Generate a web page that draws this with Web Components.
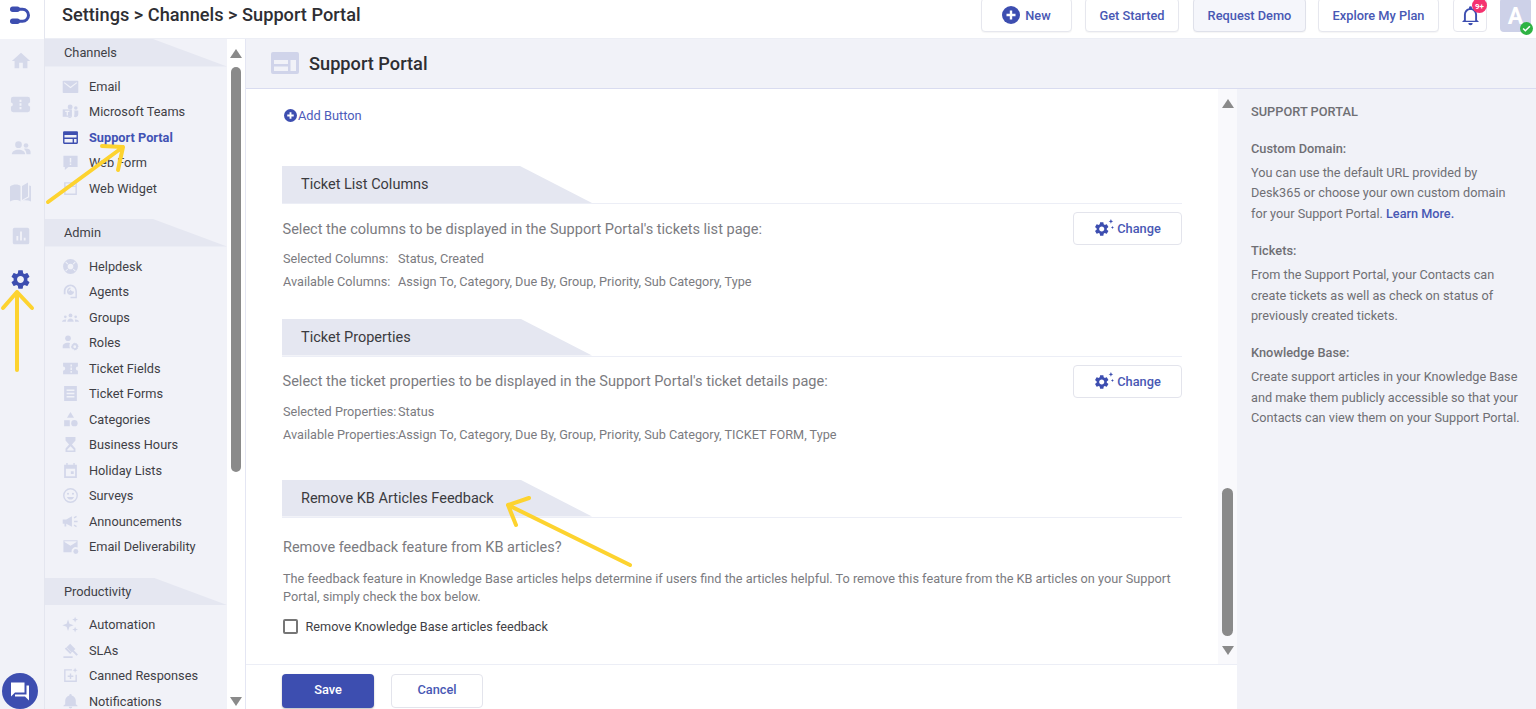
<!DOCTYPE html>
<html lang="en"><head><meta charset="utf-8"><title>Support Portal</title>
<style>
html,body{margin:0;height:100%;overflow:hidden;background:#fff}
body{font-family:Roboto,"Liberation Sans",sans-serif;color:#3b3b3f}
</style></head><body>
<app-shell>
  <app-rail slot="rail"></app-rail>
  <top-bar slot="top"></top-bar>
  <nav-panel slot="nav">
    <nav-group label="Channels" first>
      <nav-item icon="mail">Email</nav-item>
      <nav-item icon="teams">Microsoft Teams</nav-item>
      <nav-item icon="portal" active>Support Portal</nav-item>
      <nav-item icon="form">Web Form</nav-item>
      <nav-item icon="widget">Web Widget</nav-item>
    </nav-group>
    <nav-group label="Admin">
      <nav-item icon="help">Helpdesk</nav-item>
      <nav-item icon="agent">Agents</nav-item>
      <nav-item icon="groups">Groups</nav-item>
      <nav-item icon="roles">Roles</nav-item>
      <nav-item icon="ticket">Ticket Fields</nav-item>
      <nav-item icon="tform">Ticket Forms</nav-item>
      <nav-item icon="cats">Categories</nav-item>
      <nav-item icon="hour">Business Hours</nav-item>
      <nav-item icon="cal">Holiday Lists</nav-item>
      <nav-item icon="smile">Surveys</nav-item>
      <nav-item icon="mega">Announcements</nav-item>
      <nav-item icon="deliv">Email Deliverability</nav-item>
    </nav-group>
    <nav-group label="Productivity">
      <nav-item icon="spark">Automation</nav-item>
      <nav-item icon="gavel">SLAs</nav-item>
      <nav-item icon="canned">Canned Responses</nav-item>
      <nav-item icon="bell">Notifications</nav-item>
    </nav-group>
  </nav-panel>
  <page-head slot="head">Support Portal</page-head>
  <settings-body slot="body">
    <add-link>Add Button</add-link>
    <config-section heading="Ticket List Columns" gap="25.5" lead="Select the columns to be displayed in the Support Portal's tickets list page:">
      <detail-line label="Selected Columns:">Status, Created</detail-line>
      <detail-line label="Available Columns:">Assign To, Category, Due By, Group, Priority, Sub Category, Type</detail-line>
    </config-section>
    <config-section heading="Ticket Properties" gap="34" lead="Select the ticket properties to be displayed in the Support Portal's ticket details page:">
      <detail-line label="Selected Properties:">Status</detail-line>
      <detail-line label="Available Properties:">Assign To, Category, Due By, Group, Priority, Sub Category, TICKET FORM, Type</detail-line>
    </config-section>
    <feedback-section heading="Remove KB Articles Feedback"></feedback-section>
  </settings-body>
  <form-footer slot="foot"></form-footer>
  <help-panel slot="help"></help-panel>
</app-shell>
<script>
const I={
home:'<path d="M10 20v-6h4v6h5v-8h3L12 3 2 12h3v8z"/>',
rticket:'<path fill-rule="evenodd" d="M22 10V6.5A2.5 2.5 0 0 0 19.500 4h-15A2.500 2.500 0 0 0 2 6.500V10a2 2 0 0 1 0 4v3.500A2.500 2.500 0 0 0 4.500 20h15a2.500 2.500 0 0 0 2.500-2.500V14a2 2 0 0 1 0-4zM13 7h-2v2.500h2zm0 3.700h-2v2.600h2zm0 3.800h-2V17h2z"/>',
people:'<circle cx="9" cy="8" r="4"/><circle cx="18" cy="9" r="2.800"/><path d="M1 19.500c0-3.500 3.500-5.500 8-5.500s8 2 8 5.500zM15.500 13c.8-.3 1.600-.4 2.500-.4 3 0 5.500 1.400 5.500 4V19.500h-5c0-2.500-1-4.800-3-6.500z"/>',
book:'<path fill-rule="evenodd" d="M1 6.500C2.800 5 5 4.500 7 4.500c1.800 0 3.500.5 4.500 1.500v15.500c-1.300-1-2.900-1.400-4.500-1.400-2 0-4 .4-6 1.400zM13 6l6-3.500v14L13 20zm7.200-.5L22 6v15.500c-2.500-1-5-1.500-8-1l6.200-3.200z"/>',
chart:'<path fill-rule="evenodd" d="M19 3H5a2 2 0 0 0-2 2v14c0 1.100.9 2 2 2h14a2 2 0 0 0 2-2V5a2 2 0 0 0-2-2zM9 17H7v-5h2zm4 0h-2V7h2zm4 0h-2v-3h2z"/>',
gear:'<path d="M19.140 12.940c.04-.3.06-.61.06-.94 0-.32-.02-.64-.07-.94l2.030-1.580c.18-.14.23-.41.12-.61l-1.920-3.320c-.12-.22-.37-.29-.59-.22l-2.390.96c-.5-.38-1.030-.7-1.620-.94l-.36-2.540c-.04-.24-.24-.41-.48-.41h-3.840c-.24 0-.43.17-.47.41l-.36 2.540c-.59.24-1.130.57-1.620.94l-2.390-.96c-.22-.08-.47 0-.59.22L2.740 8.870c-.12.21-.08.47.12.61l2.030 1.580c-.05.3-.09.63-.09.94s.02.64.07.94l-2.030 1.580c-.18.14-.23.41-.12.61l1.920 3.320c.12.22.37.29.59.22l2.390-.96c.5.38 1.030.7 1.620.94l.36 2.540c.05.24.24.41.48.41h3.840c.24 0 .44-.17.47-.41l.36-2.540c.59-.24 1.130-.56 1.620-.94l2.390.96c.22.08.47 0 .59-.22l1.920-3.320c.12-.22.07-.47-.12-.61l-2.010-1.580zM12 15.600c-1.980 0-3.600-1.620-3.600-3.600s1.620-3.600 3.600-3.600 3.600 1.620 3.600 3.600-1.620 3.600-3.600 3.600z"/>',
mail:'<rect x="1" y="4" width="22" height="17" rx="1"/><path d="M3 6.500 12 13.500 21 6.500" fill="none" stroke="#f1f2f8" stroke-width="1.600"/>',
teams:'<circle cx="11.500" cy="5.500" r="3.500"/><circle cx="19.500" cy="7" r="2.500"/><path d="M1 9h13v10.500H1z"/><path d="M15.500 10.500H23V16a4 4 0 0 1-6 3.500c-.3-.2.500-2 .5-3.500v-5z"/><path d="M8 19.500h6a4 4 0 0 1-6 0z"/><path d="M4.500 11h6v1.700H8.400v5H6.600v-5H4.500z" fill="#f1f2f8"/>',
portal:'<path fill-rule="evenodd" d="M3 3h18a1.500 1.500 0 0 1 1.500 1.500v15A1.500 1.500 0 0 1 21 21H3a1.500 1.500 0 0 1-1.500-1.500v-15A1.500 1.500 0 0 1 3 3zm.500 5.500V12h17V8.500zm0 5.500v5h11.500v-5zm13.500 0v5h3.500v-5z"/>',
form:'<path fill-rule="evenodd" d="M2 2.500h20v16H9l-5 4v-4H2zM11 5.500v6.500h2V5.500zm0 8v2h2v-2z"/>',
widget:'<path fill-rule="evenodd" d="M3 3h18v18H3zm2 2v3h14V5zm0 5v9h14v-9z"/>',
help:'<path fill-rule="evenodd" d="M12 1.500a10.500 10.500 0 1 0 0 21 10.500 10.500 0 0 0 0-21zM12 8a4 4 0 1 1 0 8 4 4 0 0 1 0-8zM5.500 5l3.200 3-1 1-3-3.100zm13 0 .8.9-3 3.100-1-1zM7.700 15l1 1-3.200 3-.8-.9zm8.600 0 3 3.100-.8.900-3.200-3z"/>',
agent:'<path fill-rule="evenodd" d="M12 2C6.500 2 2.500 6.200 2.500 12v4H5v-4c0-4.200 3-7.500 7-7.500s7 3.300 7 7.500v7.500h-7v2h9V12c0-5.800-4-10-9-10zM12 6.500c-3 0-5 2.500-5 5.500 0 2.800 2.200 5 5 5s5-2.200 5-5c-2.500 0-4-1-5-3-.6 1.500-1.500 2.500-3 3 .5-2 1.500-3.500 3-3.500z"/>',
groups:'<circle cx="12" cy="9" r="2.700"/><circle cx="4.700" cy="11" r="1.900"/><circle cx="19.300" cy="11" r="1.900"/><path d="M7.500 18c0-2.500 2-4.500 4.500-4.500s4.500 2 4.500 4.500zM0 18c0-2 2-3.300 4.700-3.300.6 0 .9 0 1.300.2C5.500 15.700 5.500 17 5.500 18zm18.500 0c0-1 0-2.300-.5-3.100.4-.2.700-.2 1.300-.2C22 14.700 24 16 24 18z"/>',
roles:'<circle cx="8.500" cy="6" r="4"/><path d="M1 20v-2.500c0-3 3.500-5 7.500-5 1 0 2 .1 2.800.4-1 1.800-1 5 0 7.100z"/><path fill-rule="evenodd" d="M18 12l1.200 1.200 1.600-.3.6 1.600 1.600.6-.3 1.600L23.500 18l-1.400 1.200.3 1.600-1.600.6-.6 1.600-1.600-.3L18 23.500l-1.200-1.800-1.600.3-.6-1.600-1.600-.6.3-1.600L12.500 18l1.300-1.300-.3-1.600 1.600-.6.6-1.600 1.600.3zm0 4a2 2 0 1 0 0 4 2 2 0 0 0 0-4z"/>',
ticket:'<path fill-rule="evenodd" d="M1.500 4h21v5a3 3 0 0 0 0 6v5h-21v-5a3 3 0 0 0 0-6zM14 6.500h-2v2.500h2zm0 4h-2V14h2zm0 5h-2v2.500h2z"/>',
tform:'<path fill-rule="evenodd" d="M3 1.500h18v21H3zm3.500 5v2h11v-2zm0 4.500v2h11v-2zm0 4.500v2h11v-2z"/>',
cats:'<path d="M12 1.500l5 8H7z"/><path d="M3 13h8v8.500H3z"/><circle cx="17.500" cy="17.200" r="4.500"/>',
hour:'<path fill-rule="evenodd" d="M5 1.500h14v5L14 12l5 5.500v5H5v-5l5-5.500-5-5.500zM7.500 19v1.500h9V19L12 14.500z"/>',
cal:'<path fill-rule="evenodd" d="M6 1.500h2V4h8V1.500h2V4h3v18.500H3V4h3zM5.500 9.500V20h13V9.500zm7 3.500h4v4h-4z"/>',
smile:'<path fill-rule="evenodd" d="M12 1.500a10.500 10.500 0 1 0 0 21 10.500 10.500 0 0 0 0-21zm0 2a8.500 8.500 0 1 1 0 17 8.500 8.500 0 0 1 0-17zM8.500 8a1.500 1.500 0 1 0 0 3 1.500 1.500 0 0 0 0-3zm7 0a1.500 1.500 0 1 0 0 3 1.500 1.500 0 0 0 0-3zM7 14c.8 2.300 2.700 3.700 5 3.700s4.200-1.400 5-3.700z"/>',
mega:'<path d="M1 9h5l8-4.500v15L6 15v4H3.500v-4H1z"/><path d="M17 11h5v2h-5zM16.500 6l3.500-2 1 1.700-3.500 2zM16.500 18l3.500 2 1-1.700-3.500-2z"/>',
deliv:'<path fill-rule="evenodd" d="M2 3h20v10.500a6 6 0 0 0-8.500 6.500H2zm1.500 2.500L12 11l8.500-5.500V4.500h-17z"/><circle cx="19.500" cy="19" r="3.500"/>',
spark:'<path d="M8.500 5l2 6 6 2-6 2-2 6-2-6-6-2 6-2zM18.500 1l1.100 3 3 1.100-3 1.100-1.100 3-1.100-3-3-1.100 3-1.100zM18.500 15l1.100 3 3 1.100-3 1.100-1.100 3-1.100-3-3-1.100 3-1.100z"/>',
gavel:'<path d="M2 20h13v2.500H2zM6.500 7.500l5-5 7.300 7.300-5 5z"/><path d="M15.500 10.500l7 7-2 2-7-7zM4 9.500l2-2 7.500 7.500-2 2z"/>',
canned:'<path fill-rule="evenodd" d="M3 3h11v2H5v14h14v-8h2v10H3zM11 9h2v3h3v2h-3v3h-2v-3H8v-2h3zM18.500 1l1 2.500L22 4.500l-2.500 1-1 2.500-1-2.500-2.500-1 2.500-1z"/>',
bell:'<path d="M12 22a2.500 2.500 0 0 0 2.500-2.500h-5A2.500 2.500 0 0 0 12 22zm7.500-6v-5c0-3.600-2.300-6.600-5.800-7.400V3a1.700 1.700 0 0 0-3.400 0v.6C6.800 4.400 4.500 7.400 4.500 11v5l-2.500 2v.8h20V18z"/>',
bello:'<path fill-rule="evenodd" d="M12 23a2.500 2.500 0 0 0 2.500-2.500h-5A2.500 2.500 0 0 0 12 23zm7.500-6v-6c0-3.600-2.300-6.600-5.800-7.400V3a1.700 1.700 0 0 0-3.400 0v.6C6.800 4.400 4.500 7.400 4.500 11v6L2.500 19v.5h19V19zm-2.200 1H6.700v-7c0-3 2.300-5.400 5.300-5.400s5.300 2.400 5.300 5.400z"/>',
chat:'<path d="M3 3.500h13.500v10H7l-4 4z"/><path d="M18.500 6.500H21v15l-4-4H7v-2h11.500z"/>'
};
const svg=(n,s,c='currentColor',extra='')=>`<svg width="${s}" height="${s}" viewBox="0 0 24 24" fill="${c}" aria-hidden="true" ${extra}>${I[n]}</svg>`;
const def=(n,css,html)=>{customElements.define(n,class extends HTMLElement{
  connectedCallback(){ if(this.shadowRoot)return; const r=this.attachShadow({mode:'open'});
    const body=typeof html==='function'?html(this):html; r.innerHTML=`<style>${css}</style>${body}`; }
});};

def('app-shell',`
:host{display:block;position:relative;width:1536px;height:709px;overflow:hidden}
.g{display:grid;width:1536px;height:709px;grid-template-columns:45px 201px 991px 299px;grid-template-rows:39px 50px 575px 45px}
.r{grid-column:1;grid-row:1/5;min-height:0}
.t{grid-column:2/5;grid-row:1}
.n{grid-column:2;grid-row:2/5;min-height:0}
.h{grid-column:3/5;grid-row:2}
.b{grid-column:3;grid-row:3;min-height:0}
.f{grid-column:3;grid-row:4}
.p{grid-column:4;grid-row:3/5}
svg.o{position:absolute;left:0;top:0;pointer-events:none}
`,`<div class="g">
<div class="r"><slot name="rail"></slot></div><div class="t"><slot name="top"></slot></div>
<div class="n"><slot name="nav"></slot></div><div class="h"><slot name="head"></slot></div>
<div class="b"><slot name="body"></slot></div><div class="f"><slot name="foot"></slot></div>
<div class="p"><slot name="help"></slot></div></div>
<svg class="o" width="1536" height="709" fill="none" stroke="#fdd32f" stroke-width="4" stroke-linecap="round" stroke-linejoin="round">
<path d="M48 202 123 147M102 146 123 147 118 170"/>
<path d="M17 370V292M3 308 17 292 32 308"/>
<path d="M630 565 508 505M529 498 508 505 516 525"/></svg>`);

def('app-rail',`
:host{display:flex;flex-direction:column;height:100%;background:#f1f2f8;position:relative;box-sizing:border-box;border-right:1px solid #e4e6ef}
.logo{height:39px;box-sizing:border-box;background:#fff;display:flex;align-items:flex-start;justify-content:center;flex:none;padding-top:5px}
.i{height:43.8px;display:flex;align-items:center;justify-content:center;color:#d5d9ea;flex:none;padding-right:3px}
.a{color:#3d4eb0}
.fab{position:absolute;left:2px;top:673px;width:36px;height:36px;border-radius:50%;background:#3d4eb0;display:flex;align-items:center;justify-content:center;color:#fff}
`,`<div class="logo"><svg width="24" height="20" viewBox="0 0 24 20"><path d="M8 4.200H12.500a6 6 0 0 1 0 12H8" fill="none" stroke="#3d4eb0" stroke-width="3"/><rect x="0" y="1.500" width="10" height="5.500" rx="2.700" fill="#3d4eb0"/><rect x="0" y="13.500" width="10" height="5.500" rx="2.700" fill="#3d4eb0"/></svg></div>
<div class="i">${svg('home',22)}</div><div class="i">${svg('rticket',23)}</div><div class="i">${svg('people',20)}</div><div class="i">${svg('book',24)}</div><div class="i">${svg('chart',22)}</div><div class="i a">${svg('gear',23)}</div>
<div class="fab">${svg('chat',24)}</div>`);

def('top-btn',`
:host{display:block}
div{height:34px;box-sizing:border-box;border:1px solid #e6e7ee;border-radius:4px;background:#fff;display:flex;align-items:center;justify-content:center;gap:5px;font:500 12.800px Roboto,sans-serif;color:#4858b4;box-shadow:0 1px 1px #0000000a}
:host([hl]) div{background:#f5f6fb;border-color:#dfe1ea}
svg{flex:none}
`,t=>`<div style="width:${t.getAttribute('w')}px"><slot name="i"></slot><slot></slot></div>`);

def('top-bar',`
:host{display:flex;align-items:flex-start;height:39px;box-sizing:border-box;background:#fff;border-bottom:1px solid #eceef5;padding-left:17px;overflow:hidden}
h1{margin:0;font:500 18.200px/30px Roboto,sans-serif;color:#2e2e33;flex:1;white-space:nowrap}
.bs{display:flex;gap:13px;margin-top:-2px;align-items:flex-start}
.bell{position:relative;width:34px;height:34px;box-sizing:border-box;border:1px solid #e6e7ee;border-radius:4px;display:flex;align-items:center;justify-content:center;color:#3d4eb0;margin-left:1px}
.badge{position:absolute;left:18px;top:-1px;width:15px;height:15px;border-radius:50%;background:#f5326f;color:#fff;font:700 8px/17px Roboto,sans-serif;text-align:center}
.ava{position:relative;width:31px;height:34px;border-radius:4px;background:#cdd1e8;color:#fff;font:700 23px/38px Roboto,sans-serif;text-align:center;margin-right:5px}
.ok{position:absolute;left:20px;top:23.500px;width:13px;height:13px;border-radius:50%;background:#2fb344;display:flex;align-items:center;justify-content:center}
`,`<h1>Settings &gt; Channels &gt; Support Portal</h1><div class="bs">
<top-btn w="91"><svg slot="i" width="18" height="18" viewBox="0 0 18 18"><circle cx="9" cy="9" r="9" fill="#3d4eb0"/><path d="M9 4.500v9M4.500 9h9" stroke="#fff" stroke-width="2.400"/></svg>New</top-btn>
<top-btn w="94">Get Started</top-btn><top-btn w="113" hl style="margin-left:1px">Request Demo</top-btn><top-btn w="121" style="margin-left:-1px">Explore My Plan</top-btn>
<div class="bell">${svg('bello',21)}<span class="badge">9+</span></div>
<div class="ava">A<span class="ok"><svg width="9" height="9" viewBox="0 0 8 8"><path d="M1 4l2 2 4-4" fill="none" stroke="#fff" stroke-width="1.400"/></svg></span></div></div>`);

def('fake-scroll',`
:host{display:flex;flex-direction:column;align-items:center;flex:none;height:100%;box-sizing:border-box}
.up,.dn{width:0;height:0;border-left:6.500px solid transparent;border-right:6.500px solid transparent;flex:none}
.up{border-bottom:9px solid #8a8a8a}.dn{border-top:9px solid #8a8a8a}
.th{background:#8a8a8a;border-radius:6px;flex:none}
.s{flex:1}
`,t=>`<div class="up" style="margin-top:${t.getAttribute('pad')}px"></div><div style="height:${t.getAttribute('top')}px;flex:none"></div><div class="th" style="width:${t.getAttribute('tw')}px;height:${t.getAttribute('len')}px"></div><div class="s"></div><div class="dn" style="margin-bottom:${t.getAttribute('padb')}px"></div>`);

def('nav-panel',`
:host{display:flex;height:100%;overflow:hidden;background:#fff}
.l{width:182px;background:#f1f2f8;overflow:hidden;flex:none}
.sb{width:18px;flex:none;border-right:1px solid #e4e6f3;background:#fff}
fake-scroll{width:18px}
`,`<div class="l"><slot></slot></div><div class="sb"><fake-scroll pad="10" padb="3" top="9" tw="10" len="405"></fake-scroll></div>`);

def('nav-group',`
:host{display:block;margin-top:18px}
:host([first]){margin-top:0}
.h{height:27.500px;background:#e5e7f1;clip-path:polygon(0 0,108px 0,100% 100%,0 100%);padding-left:19px;font:400 12.800px/27px Roboto,sans-serif;color:#3f3f46;display:flex;align-items:center;width:182px;box-sizing:border-box}
.b{padding-top:7px}
`,t=>`<div class="h">${t.getAttribute('label')}</div><div class="b"><slot></slot></div>`);

def('nav-item',`
:host{display:flex;align-items:center;height:25.500px;padding-left:17px;gap:10px;font:400 12.750px Roboto,sans-serif;color:#3f3f46;white-space:nowrap}
:host([active]){color:#4152b4;font-weight:700}
svg{color:#d3d7ea;flex:none}
:host([active]) svg{color:#3d4eb0}
`,t=>`${svg(t.getAttribute('icon'),17)}<slot></slot>`);

def('page-head',`
:host{display:flex;align-items:center;gap:10px;height:50px;box-sizing:border-box;background:#f1f2f8;border-bottom:1px solid #d9dcf0;padding-left:25px;padding-bottom:1px;font:500 18.200px Roboto,sans-serif;color:#2e2e33}
svg{flex:none}
`,`<svg width="28" height="22" viewBox="0 0 28 22"><path fill="#d0d4ea" fill-rule="evenodd" d="M2 0h24a2 2 0 0 1 2 2v18a2 2 0 0 1-2 2H2a2 2 0 0 1-2-2V2a2 2 0 0 1 2-2zm1 8v4h14V8zm0 6.500V19h14v-4.500zM19.500 8v11H25V8z"/></svg><slot></slot>`);

def('settings-body',`
:host{display:flex;height:100%;overflow:hidden}
.c{width:900px;padding:16px 0 0 36px;flex:none;overflow:hidden}
.t{margin-left:36px;flex:none;width:19px;background:#f9f9fc;display:block}
fake-scroll{width:19px}
`,`<div class="c"><slot></slot></div><div class="t"><fake-scroll pad="10" padb="9" top="380" tw="11" len="148"></fake-scroll></div>`);

def('add-link',`
:host{display:flex;align-items:center;height:20px;padding-left:2px;gap:1px;font:400 12.800px Roboto,sans-serif;color:#4d5cba;margin-bottom:41px}
svg{flex:none}
`,`<svg width="13" height="13" viewBox="0 0 18 18"><circle cx="9" cy="9" r="9" fill="#3d4eb0"/><path d="M9 4.500v9M4.500 9h9" stroke="#fff" stroke-width="2.600"/></svg><slot></slot>`);

def('section-head',`
:host{display:block;border-bottom:1px solid #eceef6;height:37px}
div{width:310px;height:37px;box-sizing:border-box;background:#e5e7f1;clip-path:polygon(0 0,238px 0,100% 100%,0 100%);padding-left:19px;font:400 14.500px/37.500px Roboto,sans-serif;color:#3b3b40}
`,`<div><slot></slot></div>`);

const changeIcon=`<svg width="20" height="18.500" viewBox="0 0 26 24"><g transform="translate(-1 2) scale(.92)">${I.gear.replace('<path','<path fill="#3d4eb0"')}</g><path fill="#3d4eb0" d="M22 0l.9 2.100L25 3l-2.100.9L22 6l-.9-2.100L19 3l2.100-.9zM24 9l.6 1.400 1.400.6-1.400.6L24 13l-.6-1.400L22 11l1.400-.6z"/></svg>`;
def('config-section',`
:host{display:block}
.r{display:flex;justify-content:space-between;align-items:center;margin-top:8px;height:33px}
.l{font:400 14.560px Roboto,sans-serif;color:#7b7b7f;padding-left:.5px}
.btn{width:109px;height:33px;box-sizing:border-box;border:1px solid #e3e4ec;border-radius:4px;display:flex;align-items:center;justify-content:center;gap:3px;font:500 12.800px Roboto,sans-serif;color:#4858b4;background:#fff}
.d{margin-top:2px}
`,t=>`<section-head>${t.getAttribute('heading')}</section-head><div class="r"><span class="l">${t.getAttribute('lead')}</span><span class="btn">${changeIcon}Change</span></div><div class="d" style="margin-bottom:${t.getAttribute('gap')-0}px"><slot></slot></div>`);

def('detail-line',`
:host{display:grid;grid-template-columns:115px 1fr;padding-left:1px;height:23px;align-items:center;font:400 12.700px Roboto,sans-serif;color:#7b7b7f;white-space:nowrap}
`,t=>`<span>${t.getAttribute('label')}</span><span><slot></slot></span>`);

def('feedback-section',`
:host{display:block}
.q{font:400 14.500px/18px Roboto,sans-serif;color:#7b7b7f;margin-top:21px;padding-left:1px}
p{margin:13px 0 0;font:400 12.730px/18px Roboto,sans-serif;color:#7b7b7f;padding-left:1px}
label{display:flex;align-items:center;gap:7.500px;margin-top:11px;font:400 12.700px/20px Roboto,sans-serif;color:#3f3f46}
i{display:block;width:11px;height:11px;border:2px solid #767676;border-radius:2px;background:#fff;margin-left:1px}
`,t=>`<section-head>${t.getAttribute('heading')}</section-head><div class="q">Remove feedback feature from KB articles?</div><p>The feedback feature in Knowledge Base articles helps determine if users find the articles helpful. To remove this feature from the KB articles on your Support Portal, simply check the box below.</p><label><i></i>Remove Knowledge Base articles feedback</label>`);

def('form-footer',`
:host{display:flex;gap:17px;height:45px;box-sizing:border-box;border-top:1px solid #eceef6;padding:9px 0 0 36px;background:#fff}
span{width:92px;height:34px;box-sizing:border-box;border-radius:4px;display:flex;align-items:center;justify-content:center;font:500 12.800px Roboto,sans-serif;padding-bottom:3px}
.s{background:#3d4eb0;color:#fff;box-shadow:0 1px 2px #0004}
.c{background:#fff;color:#4858b4;border:1px solid #e3e4ec}
`,`<span class="s">Save</span><span class="c">Cancel</span>`);

def('help-panel',`
:host{display:block;height:100%;box-sizing:border-box;background:#f1f2f8;padding:15px 0 0 14px;font:400 12.700px/20.400px Roboto,sans-serif;color:#6f6f74}
h2{margin:0 0 18.500px;font:500 12.800px/16px Roboto,sans-serif;color:#6f6f74}
h3{margin:0 0 4.500px;font:500 12.800px/20px Roboto,sans-serif;color:#6f6f74}
p{margin:0 0 16.500px;white-space:nowrap}
b{font-weight:500;color:#4858b4}
`,`<h2>SUPPORT PORTAL</h2>
<h3>Custom Domain:</h3><p>You can use the default URL provided by<br>Desk365 or choose your own custom domain<br>for your Support Portal. <b>Learn More.</b></p>
<h3>Tickets:</h3><p>From the Support Portal, your Contacts can<br>create tickets as well as check on status of<br>previously created tickets.</p>
<h3>Knowledge Base:</h3><p>Create support articles in your Knowledge Base<br>and make them publicly accessible so that your<br>Contacts can view them on your Support Portal.</p>`);
</script>
</body></html>
